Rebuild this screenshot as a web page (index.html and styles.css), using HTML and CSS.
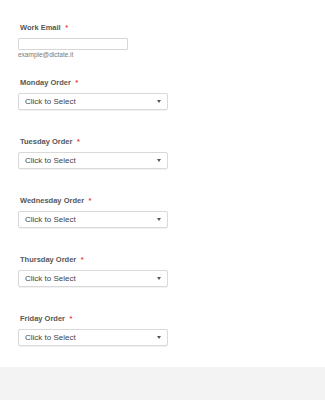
FILE: index.html
```html
<!DOCTYPE html>
<html>
<head>
<meta charset="utf-8">
<link rel="stylesheet" href="styles.css">
</head>
<body>
<div class="form">
  <div class="field email">
    <div class="label">Work Email<span class="req">*</span></div>
    <div class="input"></div>
    <div class="hint">example@dictate.it</div>
  </div>
  <div class="field">
    <div class="label">Monday Order<span class="req">*</span></div>
    <div class="select"><span>Click to Select</span><span class="arrow"></span></div>
  </div>
  <div class="field">
    <div class="label">Tuesday Order<span class="req">*</span></div>
    <div class="select"><span>Click to Select</span><span class="arrow"></span></div>
  </div>
  <div class="field">
    <div class="label">Wednesday Order<span class="req">*</span></div>
    <div class="select"><span>Click to Select</span><span class="arrow"></span></div>
  </div>
  <div class="field">
    <div class="label">Thursday Order<span class="req">*</span></div>
    <div class="select"><span>Click to Select</span><span class="arrow"></span></div>
  </div>
  <div class="field">
    <div class="label">Friday Order<span class="req">*</span></div>
    <div class="select"><span>Click to Select</span><span class="arrow"></span></div>
  </div>
</div>
<div class="footer"></div>
</body>
</html>
```
FILE: styles.css
```css
html, body {
  margin: 0;
  padding: 0;
  background: #ffffff;
  font-family: "Liberation Sans", Arial, sans-serif;
}
.form {
  height: 367px;
  box-sizing: border-box;
  padding: 22px 0 0 18px;
}
.field {
  margin-bottom: 26px;
}
.field.email {
  margin-bottom: 18px;
}
.label {
  font-size: 7.5px;
  font-weight: bold;
  color: #575757;
  line-height: 12px;
  padding-left: 2px;
  margin-bottom: 4px;
}
.req {
  color: #e8423a;
  margin-left: 4.5px;
}
.input {
  width: 110px;
  height: 12px;
  box-sizing: border-box;
  border: 1px solid #d6d6d6;
  border-radius: 1px;
}
.hint {
  font-size: 6.5px;
  color: #777777;
  line-height: 9px;
}
.select {
  width: 150px;
  height: 17px;
  box-sizing: border-box;
  border: 1px solid #d9d9d9;
  border-radius: 2px;
  box-shadow: 0 1px 1px rgba(0,0,0,0.06);
  display: flex;
  align-items: center;
  justify-content: space-between;
  padding: 0 6px 0 6px;
  font-size: 8px;
  color: #444444;
}
.arrow {
  width: 0;
  height: 0;
  border-left: 2.5px solid transparent;
  border-right: 2.5px solid transparent;
  border-top: 3px solid #555555;
}
.footer {
  height: 33px;
  background: #f3f3f3;
}
```
